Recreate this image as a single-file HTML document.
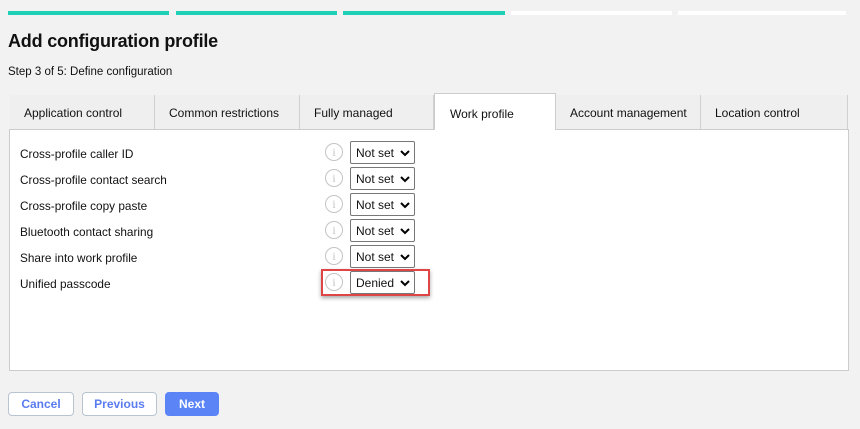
<!DOCTYPE html>
<html><head><style>
*{box-sizing:border-box;margin:0;padding:0}
body{width:860px;height:429px;background:#f2f2f2;font-family:"Liberation Sans",sans-serif;position:relative;overflow:hidden;color:#111}
.bar{position:absolute;top:11px;height:4px}
.t{background:#1ed0b6}.w{background:#fff}
h1{position:absolute;left:8px;top:31px;font-size:18px;font-weight:bold;color:#111;letter-spacing:-0.2px}
.step{position:absolute;left:8px;top:66px;font-size:11.5px}
.tab{position:absolute;top:95px;height:34px;border-right:1px solid #d0d0d0;background:#efefef;font-size:12px;padding-top:11px;padding-left:14px}
.tab.a{top:93px;height:37px;background:#fff;border:1px solid #ccc;border-bottom:none;padding-top:13px;padding-left:15px;z-index:2}
.box{position:absolute;left:9px;top:129px;width:840px;height:242px;background:#fff;border:1px solid #ccc}
.lbl{position:absolute;left:20px;font-size:11.8px}
.i{position:absolute;left:325px;width:18px;height:18px;border:1px solid #c4c4c4;border-radius:50%;color:#c4c4c4;font-size:12px;text-align:center;line-height:16px;font-family:"Liberation Serif",serif}
.sel{position:absolute;left:350px;width:65px;height:23px;border:1px solid #777;border-radius:2px;font-size:12px;padding:4px 0 0 5px;background:#fff}
.sel svg{position:absolute;right:4px;top:8px}
.red{position:absolute;left:321px;top:269px;width:109px;height:27px;border:2px solid #e04545;box-shadow:0 2px 4px rgba(0,0,0,.35)}
.btn{position:absolute;top:392px;height:24px;border:1px solid #b8c4d0;border-radius:4px;background:#fff;color:#5b7cf0;font-weight:bold;font-size:12px;text-align:center;line-height:22px}
</style></head><body>
<div class="bar t" style="left:8px;width:161px"></div>
<div class="bar t" style="left:176px;width:161px"></div>
<div class="bar t" style="left:343px;width:162px"></div>
<div class="bar w" style="left:511px;width:161px"></div>
<div class="bar w" style="left:678px;width:168px"></div>
<h1>Add configuration profile</h1>
<div class="step">Step 3 of 5: Define configuration</div>
<div class="box"></div>
<div class="tab" style="left:10px;width:145px">Application control</div>
<div class="tab" style="left:155px;width:145px">Common restrictions</div>
<div class="tab" style="left:300px;width:134px">Fully managed</div>
<div class="tab a" style="left:434px;width:122px">Work profile</div>
<div class="tab" style="left:556px;width:145px">Account management</div>
<div class="tab" style="left:701px;width:147px">Location control</div>

<div class="lbl" style="top:147px">Cross-profile caller ID</div>
<div class="lbl" style="top:173px">Cross-profile contact search</div>
<div class="lbl" style="top:199px">Cross-profile copy paste</div>
<div class="lbl" style="top:225px">Bluetooth contact sharing</div>
<div class="lbl" style="top:251px">Share into work profile</div>
<div class="lbl" style="top:277px">Unified passcode</div>

<div class="i" style="top:143px">i</div>
<div class="i" style="top:169px">i</div>
<div class="i" style="top:195px">i</div>
<div class="i" style="top:221px">i</div>
<div class="i" style="top:247px">i</div>
<div class="i" style="top:273px">i</div>

<div class="sel" style="top:141px">Not set<svg width="10" height="7"><path d="M1 1l4 4 4-4" stroke="#000" stroke-width="2" fill="none"/></svg></div>
<div class="sel" style="top:167px">Not set<svg width="10" height="7"><path d="M1 1l4 4 4-4" stroke="#000" stroke-width="2" fill="none"/></svg></div>
<div class="sel" style="top:193px">Not set<svg width="10" height="7"><path d="M1 1l4 4 4-4" stroke="#000" stroke-width="2" fill="none"/></svg></div>
<div class="sel" style="top:219px">Not set<svg width="10" height="7"><path d="M1 1l4 4 4-4" stroke="#000" stroke-width="2" fill="none"/></svg></div>
<div class="sel" style="top:245px">Not set<svg width="10" height="7"><path d="M1 1l4 4 4-4" stroke="#000" stroke-width="2" fill="none"/></svg></div>
<div class="sel" style="top:271px">Denied<svg width="10" height="7"><path d="M1 1l4 4 4-4" stroke="#000" stroke-width="2" fill="none"/></svg></div>
<div class="red"></div>

<div class="btn" style="left:8px;width:66px">Cancel</div>
<div class="btn" style="left:82px;width:75px">Previous</div>
<div class="btn" style="left:165px;width:54px;background:#5b85f7;border-color:#5b85f7;color:#fff">Next</div>
</body></html>
